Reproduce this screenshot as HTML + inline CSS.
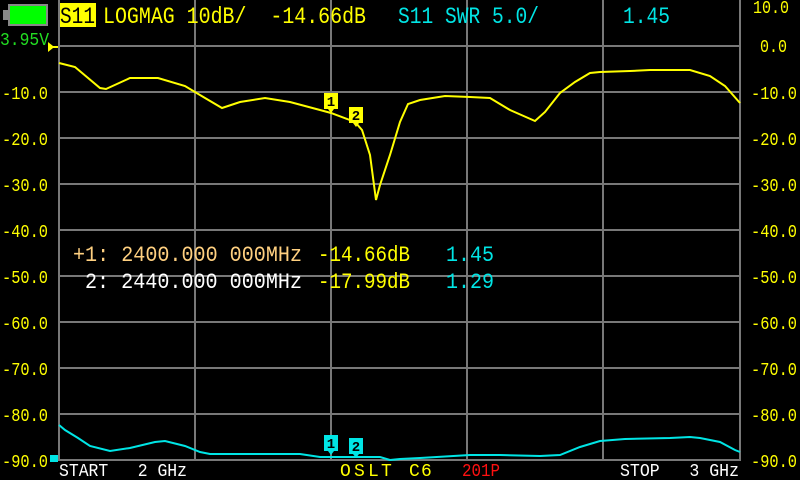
<!DOCTYPE html>
<html><head><meta charset="utf-8"><style>
html,body{margin:0;padding:0;background:#000;width:800px;height:480px;overflow:hidden}
svg{display:block}
text{font-family:"Liberation Mono","DejaVu Sans Mono",monospace;white-space:pre}
.t{font-size:23px}
.a{font-size:18px;fill:#ffff00}
.r{font-size:22px}
</style></head><body>
<svg width="800" height="480" viewBox="0 0 800 480" xmlns="http://www.w3.org/2000/svg" xml:space="preserve">
<rect width="800" height="480" fill="#000"/>
<g stroke="#787878" stroke-width="2" fill="none">
<path d="M59 0V461M195 0V461M331 0V461M467 0V461M603 0V461M740 0V461"/>
<path d="M59 46H740M59 92H740M59 138H740M59 184H740M59 230H740M59 276H740M59 322H740M59 368H740M59 414H740M59 460H740"/>
</g>
<rect x="3" y="10" width="5" height="10" fill="#888"/>
<rect x="8" y="4" width="40" height="22" fill="#888"/>
<rect x="10" y="6" width="36" height="18" fill="#00ff00"/>
<text x="0" y="45" class="a" style="fill:#22dd22" textLength="49" lengthAdjust="spacingAndGlyphs">3.95V</text>
<path d="M48 42L53 46L58 46L58 48L53 48L48 52Z" fill="#ffff00"/>
<rect x="60" y="3" width="36" height="24" fill="#ffff00"/>
<text x="60" y="23" class="t" fill="#000" textLength="35" lengthAdjust="spacingAndGlyphs">S11</text>
<text x="103" y="23" class="t" fill="#ffff00" textLength="263" lengthAdjust="spacingAndGlyphs">LOGMAG 10dB/  -14.66dB</text>
<text x="398" y="23" class="t" fill="#00e5e5" textLength="141" lengthAdjust="spacingAndGlyphs">S11 SWR 5.0/</text>
<text x="623" y="23" class="t" fill="#00e5e5" textLength="47" lengthAdjust="spacingAndGlyphs">1.45</text>
<g class="a">
<text x="2" y="99" textLength="46" lengthAdjust="spacingAndGlyphs">-10.0</text>
<text x="2" y="145" textLength="46" lengthAdjust="spacingAndGlyphs">-20.0</text>
<text x="2" y="191" textLength="46" lengthAdjust="spacingAndGlyphs">-30.0</text>
<text x="2" y="237" textLength="46" lengthAdjust="spacingAndGlyphs">-40.0</text>
<text x="2" y="283" textLength="46" lengthAdjust="spacingAndGlyphs">-50.0</text>
<text x="2" y="329" textLength="46" lengthAdjust="spacingAndGlyphs">-60.0</text>
<text x="2" y="375" textLength="46" lengthAdjust="spacingAndGlyphs">-70.0</text>
<text x="2" y="421" textLength="46" lengthAdjust="spacingAndGlyphs">-80.0</text>
<text x="2" y="467" textLength="46" lengthAdjust="spacingAndGlyphs">-90.0</text>
</g>
<g class="a">
<text x="753" y="13" textLength="36" lengthAdjust="spacingAndGlyphs">10.0</text>
<text x="760" y="52" textLength="27" lengthAdjust="spacingAndGlyphs">0.0</text>
<text x="751" y="99" textLength="46" lengthAdjust="spacingAndGlyphs">-10.0</text>
<text x="751" y="145" textLength="46" lengthAdjust="spacingAndGlyphs">-20.0</text>
<text x="751" y="191" textLength="46" lengthAdjust="spacingAndGlyphs">-30.0</text>
<text x="751" y="237" textLength="46" lengthAdjust="spacingAndGlyphs">-40.0</text>
<text x="751" y="283" textLength="46" lengthAdjust="spacingAndGlyphs">-50.0</text>
<text x="751" y="329" textLength="46" lengthAdjust="spacingAndGlyphs">-60.0</text>
<text x="751" y="375" textLength="46" lengthAdjust="spacingAndGlyphs">-70.0</text>
<text x="751" y="421" textLength="46" lengthAdjust="spacingAndGlyphs">-80.0</text>
<text x="751" y="467" textLength="46" lengthAdjust="spacingAndGlyphs">-90.0</text>
</g>
<polyline fill="none" stroke="#ffff00" stroke-width="2" points="59,63 75,67 100,88 106,89 130,78 158,78 185,86 205,98 222,108 240,102 265,98 290,102 320,110 331,113 355,122 362,130 370,155 376,200 380,185 390,155 400,122 408,104 420,100 445,96 470,97 490,98 510,110 535,121 545,112 560,93 575,82 590,73 600,72 630,71 650,70 690,70 710,76 725,86 740,103"/>
<polyline fill="none" stroke="#00e5e5" stroke-width="2" points="59,425 65,430 78,438 90,446 110,451 130,448 155,442 165,441 185,446 200,452 210,454 300,454 320,457 380,457 390,460 400,459 420,458 470,455 500,455 540,456 560,455 580,447 600,441 625,439 670,438 690,437 700,438 720,442 735,450 740,452"/>
<path d="M50 455L58 455L58 462L50 462Z" fill="#00e5e5"/>
<g font-size="14" font-weight="bold" text-anchor="middle">
<rect x="324" y="93" width="14" height="16" fill="#ffff00"/><path d="M328 109L331 113L334 109Z" fill="#ffff00"/><text x="331" y="106" fill="#000">1</text>
<rect x="349" y="107" width="14" height="16" fill="#ffff00"/><path d="M353 123L356 127L359 123Z" fill="#ffff00"/><text x="356" y="120" fill="#000">2</text>
<rect x="324" y="435" width="14" height="16" fill="#00e5e5"/><path d="M328 451L331 455L334 451Z" fill="#00e5e5"/><text x="331" y="448" fill="#000">1</text>
<rect x="349" y="438" width="14" height="16" fill="#00e5e5"/><path d="M353 454L356 458L359 454Z" fill="#00e5e5"/><text x="356" y="451" fill="#000">2</text>
</g>
<g class="r">
<text x="73" y="261" fill="#ffd080" textLength="229" lengthAdjust="spacingAndGlyphs">+1: 2400.000 000MHz</text>
<text x="318" y="261" fill="#ffff00" textLength="92" lengthAdjust="spacingAndGlyphs">-14.66dB</text>
<text x="446" y="261" fill="#00e5e5" textLength="48" lengthAdjust="spacingAndGlyphs">1.45</text>
<text x="85" y="288" fill="#ffffff" textLength="217" lengthAdjust="spacingAndGlyphs">2: 2440.000 000MHz</text>
<text x="318" y="288" fill="#ffff00" textLength="92" lengthAdjust="spacingAndGlyphs">-17.99dB</text>
<text x="446" y="288" fill="#00e5e5" textLength="48" lengthAdjust="spacingAndGlyphs">1.29</text>
</g>
<g class="a">
<text x="59" y="476" style="fill:#fff" textLength="128" lengthAdjust="spacingAndGlyphs">START   2 GHz</text>
<text x="340 354 368 381 409 421" y="476">OSLTC6</text>
<text x="462" y="476" style="fill:#ff1010" textLength="38" lengthAdjust="spacingAndGlyphs">201P</text>
<text x="620" y="476" style="fill:#fff" textLength="119" lengthAdjust="spacingAndGlyphs">STOP   3 GHz</text>
</g>
</svg>
</body></html>
